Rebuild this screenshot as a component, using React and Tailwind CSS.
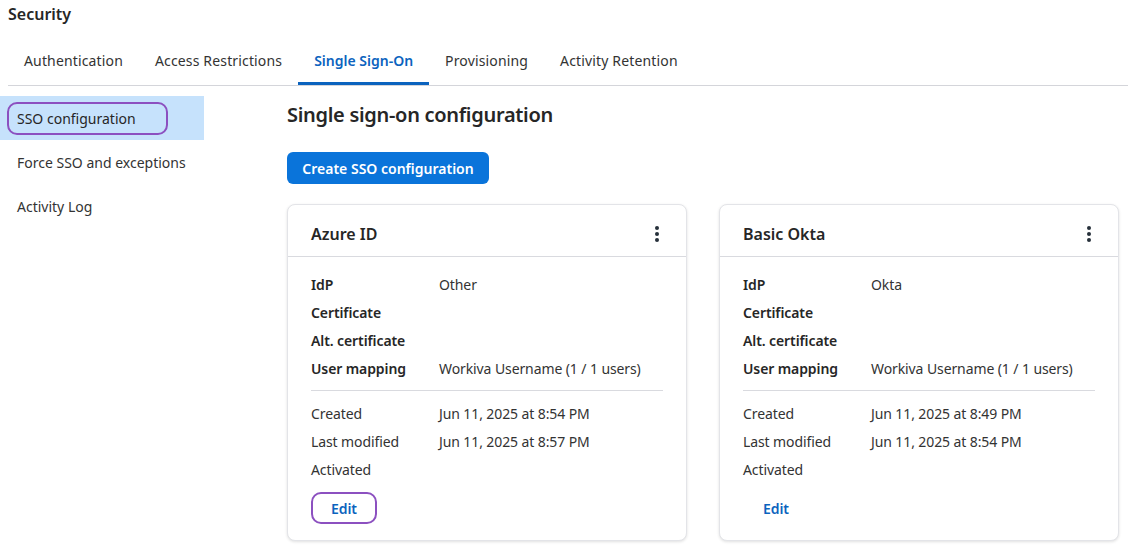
import React from 'react';

const tabs = ['Authentication', 'Access Restrictions', 'Single Sign-On', 'Provisioning', 'Activity Retention'];

const sideItems = ['SSO configuration', 'Force SSO and exceptions', 'Activity Log'];

const configs = [
    {
        name: 'Azure ID',
        idp: 'Other',
        created: 'Jun 11, 2025 at 8:54 PM',
        modified: 'Jun 11, 2025 at 8:57 PM',
        focused: true,
    },
    {
        name: 'Basic Okta',
        idp: 'Okta',
        created: 'Jun 11, 2025 at 8:49 PM',
        modified: 'Jun 11, 2025 at 8:54 PM',
        focused: false,
    },
];

const Kebab = () => (
    <svg width="12" height="18" viewBox="0 0 12 18" className="text-[#26303a]">
        <circle cx="6" cy="3" r="2" fill="currentColor" />
        <circle cx="6" cy="9" r="2" fill="currentColor" />
        <circle cx="6" cy="15" r="2" fill="currentColor" />
    </svg>
);

const Row = ({ label, value, bold }) => (
    <div className="flex h-[28px] items-center">
        <div className={`w-[128px] ${bold ? 'font-semibold text-[#262626]' : 'text-[#333]'}`}>{label}</div>
        <div className="text-[#333]">{value}</div>
    </div>
);

const ConfigCard = ({ config }) => (
    <div className="w-[400px] rounded-lg border border-[#e3e4e8] bg-white shadow-[0_1px_3px_rgba(0,0,0,0.12)]">
        <div className="flex h-[52px] items-center justify-between border-b border-[#d9dadf] px-[23px] pt-[6px]">
            <span className="text-[16px] font-semibold text-[#262626]">{config.name}</span>
            <Kebab />
        </div>
        <div className="px-[23px] pt-[13px] pb-4 text-[14px] tracking-[-0.1px]">
            <Row label="IdP" value={config.idp} bold />
            <Row label="Certificate" value="" bold />
            <Row label="Alt. certificate" value="" bold />
            <Row label="User mapping" value="Workiva Username (1 / 1 users)" bold />
            <div className="mt-2 border-t border-[#d9dadf]" />
            <div className="mt-2">
                <Row label="Created" value={config.created} />
                <Row label="Last modified" value={config.modified} />
                <Row label="Activated" value="" />
            </div>
            <button
                className={`mt-[9px] flex h-[32px] w-[66px] items-center justify-center rounded-[10px] border-2 text-[14px] font-semibold text-[#0b63be] ${config.focused ? 'border-[#8c50c0]' : 'border-transparent'}`}
            >
                Edit
            </button>
        </div>
    </div>
);

const App = () => {
    return (
        <div className="h-[550px] w-[1130px] overflow-hidden bg-white text-[#262626]" style={{ fontFamily: '"Noto Sans", sans-serif' }}>
            <div className="flex h-[38px] items-start px-2 pt-[2px]">
                <h1 className="text-[16px] font-semibold">Security</h1>
            </div>
            <div className="ml-2 mr-[2px] flex border-b border-[#d4d5da]">
                {tabs.map((t) => (
                    <div
                        key={t}
                        className={`flex h-[47px] items-center px-4 pb-[2px] text-[14px] ${
                            t === 'Single Sign-On'
                                ? 'border-b-[3px] border-[#0b63be] pt-[3px] font-semibold text-[#0b63be]'
                                : 'tracking-[0.15px] text-[#333]'
                        }`}
                    >
                        {t}
                    </div>
                ))}
            </div>
            <div className="flex pt-[10px]">
                <nav className="w-[204px] text-[14px]">
                    {sideItems.map((item, i) =>
                        i === 0 ? (
                            <div key={item} className="flex h-[44px] items-center bg-[#c6e2fc] pl-[7px]">
                                <span className="flex h-[33px] w-[161px] items-center rounded-[10px] border-2 border-[#8c50c0] px-2 text-[#262626]">
                                    {item}
                                </span>
                            </div>
                        ) : (
                            <div key={item} className="flex h-[44px] items-center pl-[17px] text-[#333]">
                                {item}
                            </div>
                        )
                    )}
                </nav>
                <main className="pl-[83px]">
                    <h2 className="mt-[5px] text-[20px] leading-[28px] font-semibold tracking-[-0.3px] text-[#262626]">Single sign-on configuration</h2>
                    <button className="mt-[23px] h-[32px] w-[202px] rounded-md bg-[#0a74da] text-[14px] font-semibold text-white">
                        Create SSO configuration
                    </button>
                    <div className="mt-5 flex gap-8">
                        {configs.map((c) => (
                            <ConfigCard key={c.name} config={c} />
                        ))}
                    </div>
                </main>
            </div>
        </div>
    );
};

export default App;
